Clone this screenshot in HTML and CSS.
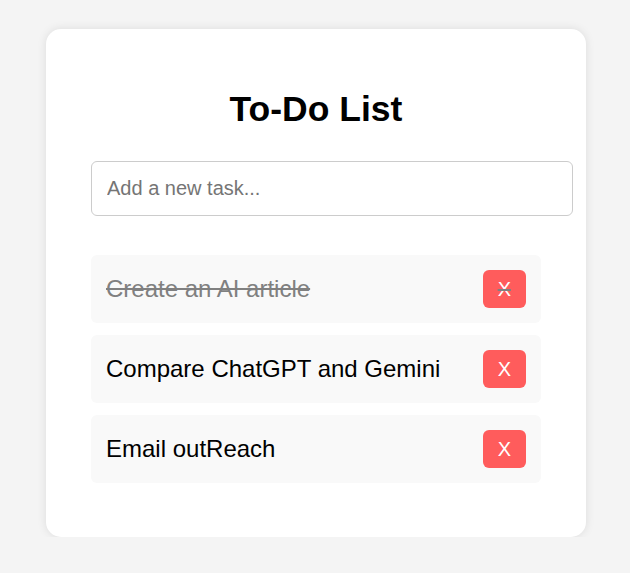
FILE: index.html
```html
<!DOCTYPE html>
<html lang="en">
<head>
<meta charset="utf-8">
<title>To-Do List</title>
<link rel="stylesheet" href="styles.css">
</head>
<body>
<div class="page">
  <main class="card">
    <h1 class="title">To-Do List</h1>
    <input class="task-input" type="text" placeholder="Add a new task...">
    <ul class="task-list">
      <li class="task completed"><span class="task-text">Create an AI article</span><button class="delete-btn">X</button></li>
      <li class="task"><span class="task-text">Compare ChatGPT and Gemini</span><button class="delete-btn">X</button></li>
      <li class="task"><span class="task-text">Email outReach</span><button class="delete-btn">X</button></li>
    </ul>
  </main>
</div>
</body>
</html>
```

FILE: styles.css
```css
html, body {
  margin: 0;
  padding: 0;
  background: #f4f4f4;
  font-family: "Liberation Sans", Arial, sans-serif;
}

.page {
  display: flex;
  justify-content: center;
  padding: 29px 0 0 2px;
}

.card {
  width: 450px;
  background: #ffffff;
  border-radius: 15px;
  box-shadow: 0 0 10px rgba(0, 0, 0, 0.1);
  padding: 45px 45px 42px;
}

.title {
  margin: 15px 0 31px;
  font-size: 35.5px;
  line-height: 41px;
  font-weight: bold;
  text-align: center;
  color: #000;
}

.task-input {
  display: block;
  width: 450px;
  margin: 0;
  padding: 15px;
  font-family: "Liberation Sans", Arial, sans-serif;
  font-size: 20px;
  line-height: 23px;
  border: 1px solid #cccccc;
  border-radius: 6px;
  outline: none;
  color: #000;
}

.task-input::placeholder {
  color: #757575;
}

.task-list {
  list-style: none;
  margin: 39px 0 0;
  padding: 0;
}

.task {
  display: flex;
  align-items: center;
  justify-content: space-between;
  padding: 15px;
  margin-bottom: 12px;
  background: #f9f9f9;
  border-radius: 6px;
  font-size: 24px;
  color: #000;
}

.task.completed {
  text-decoration: line-through;
  color: #808080;
}

.delete-btn {
  font-family: "Liberation Sans", Arial, sans-serif;
  font-size: 20px;
  line-height: 22px;
  padding: 8px 15px;
  border: none;
  border-radius: 6px;
  background: #ff5c5c;
  color: #ffffff;
  cursor: pointer;
}
```
